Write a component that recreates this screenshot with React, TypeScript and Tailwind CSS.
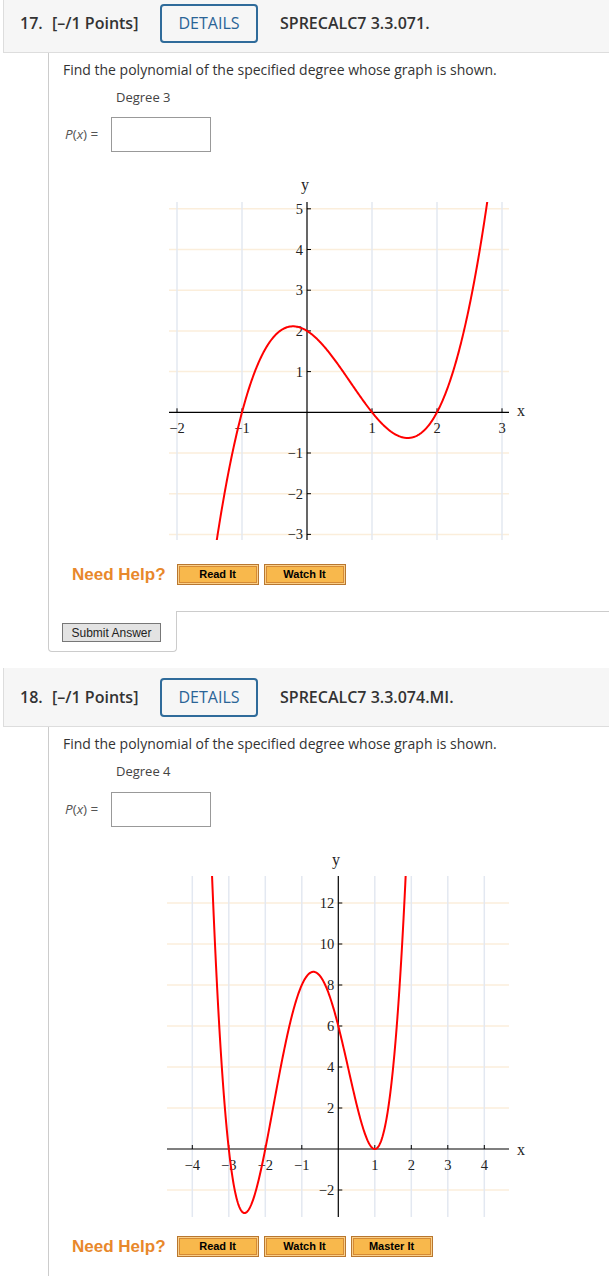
import React from 'react';

type GraphProps = {
  id: string;
  height: number;
  ox: number;
  oy: number;
  ux: number;
  uy: number;
  left: number;
  right: number;
  top: number;
  bottom: number;
  gridX: number[];
  gridY: number[];
  xLabels: number[];
  yLabels: number[];
  yPos: [number, number];
  xPos: [number, number];
  f: (x: number) => number;
};

const fmt = (n: number) => (n < 0 ? `\u2212${Math.abs(n)}` : `${n}`);

const Graph = (g: GraphProps) => {
  const px = (x: number) => g.ox + x * g.ux;
  const py = (y: number) => g.oy - y * g.uy;
  const x0 = (g.left - g.ox) / g.ux;
  const x1 = (g.right - g.ox) / g.ux;
  let d = '';
  const steps = 600;
  for (let i = 0; i <= steps; i++) {
    const x = x0 + ((x1 - x0) * i) / steps;
    let y = py(g.f(x));
    if (y < -200) y = -200;
    if (y > g.height + 200) y = g.height + 200;
    d += `${i === 0 ? 'M' : 'L'}${px(x).toFixed(2)},${y.toFixed(2)} `;
  }

  return (
    <svg width={375} height={g.height} className="block" style={{ fontFamily: '"Liberation Serif", "DejaVu Serif", serif' }}>
      <defs>
        <clipPath id={g.id}>
          <rect x={g.left} y={g.top} width={g.right - g.left} height={g.bottom - g.top} />
        </clipPath>
      </defs>
      {g.gridY.map((v) => (
        <line key={`gy${v}`} x1={g.left} x2={g.right} y1={py(v)} y2={py(v)} stroke="#fbeedb" strokeWidth={1.5} />
      ))}
      {g.gridX.map((v) => (
        <line key={`gx${v}`} x1={px(v)} x2={px(v)} y1={g.top} y2={g.bottom} stroke="#e3e8f1" strokeWidth={1.5} />
      ))}
      <line x1={g.left} x2={g.right} y1={g.oy} y2={g.oy} stroke="#000" strokeWidth={1.2} />
      <line x1={g.ox} x2={g.ox} y1={g.top} y2={g.bottom} stroke="#000" strokeWidth={1.2} />
      {g.xLabels.map((v) => (
        <g key={`xl${v}`}>
          <line x1={px(v)} x2={px(v)} y1={g.oy - 4} y2={g.oy} stroke="#000" strokeWidth={1} />
          <text x={px(v)} y={g.oy + 21} fontSize={14.5} textAnchor="middle" fill="#222">
            {fmt(v)}
          </text>
        </g>
      ))}
      {g.yLabels.map((v) => (
        <g key={`yl${v}`}>
          <line x1={g.ox} x2={g.ox + 4} y1={py(v)} y2={py(v)} stroke="#000" strokeWidth={1} />
          <text x={g.ox - 4} y={py(v) + 5} fontSize={14.5} textAnchor="end" fill="#222">
            {fmt(v)}
          </text>
        </g>
      ))}
      <text x={g.yPos[0]} y={g.yPos[1]} fontSize={16} textAnchor="middle" fill="#222">
        y
      </text>
      <text x={g.xPos[0]} y={g.xPos[1]} fontSize={16} textAnchor="middle" fill="#222">
        x
      </text>
      <path d={d} fill="none" stroke="#ff0000" strokeWidth={2} clipPath={`url(#${g.id})`} strokeLinejoin="round" />
    </svg>
  );
};

const Header = ({ num, code }: { num: string; code: string }) => (
  <div className="ml-[3px] h-[59px] border-l border-b border-[#dddddd] bg-[#f6f6f6] flex items-center pl-[16px] text-[16px] font-semibold text-[#333]">
    <span className="inline-block w-[32px]">{num}</span>
    <span className="inline-block w-[108px]">[–/1 Points]</span>
    <span className="w-[98px] h-[39px] border-2 border-[#2f6b9a] rounded-[4px] flex items-center justify-center font-normal text-[#2a6496]">
      DETAILS
    </span>
    <span className="ml-[22px]">{code}</span>
  </div>
);

const HelpBtn = ({ label }: { label: string }) => (
  <span
    className="w-[82px] h-[21px] border border-[#b9772f] bg-[#f8b84c] flex items-center justify-center text-[11px] font-bold text-black"
    style={{ fontFamily: '"Liberation Sans", Arial, sans-serif', boxShadow: 'inset 0 0 0 1px #f9d08a, inset 0 0 0 2px #d58a35' }}
  >
    {label}
  </span>
);

const NeedHelp = ({ labels, mt }: { labels: string[]; mt: string }) => (
  <div className={`flex items-center h-[21px] ml-[9px] ${mt}`}>
    <span className="text-[17px] leading-[21px] font-bold text-[#e8882b] mr-[11px]" style={{ fontFamily: '"Liberation Sans", Arial, sans-serif' }}>
      Need Help?
    </span>
    <div className="flex gap-[5px]">
      {labels.map((l) => (
        <HelpBtn key={l} label={l} />
      ))}
    </div>
  </div>
);

const Prompt = ({ degree, gap }: { degree: number; gap: string }) => (
  <>
    <div className="text-[14px] leading-[18px] text-[#333]">Find the polynomial of the specified degree whose graph is shown.</div>
    <div className="mt-[9px] ml-[53px] text-[13px] leading-[18px] text-[#444]">Degree {degree}</div>
    <div className={`flex items-center ${gap}`}>
      <span className="ml-[2px] w-[46px] text-[13.5px] text-[#555]">
        <i>P</i>(<i>x</i>) =
      </span>
      <span className="w-[100px] h-[35px] border border-[#999] bg-white" />
    </div>
  </>
);

export default function App() {
  return (
    <div className="w-full min-h-[1276px] bg-white overflow-hidden" style={{ fontFamily: '"Open Sans", "Noto Sans", sans-serif' }}>
      <div className="-mt-[6px]">
        <Header num="17." code="SPRECALC7 3.3.071." />
      </div>
      <div className="ml-[48px] border-l border-[#cccccc] pl-[14px] pt-[8px] pb-[26px]">
        <Prompt degree={3} gap="mt-[11px]" />
        <div className="mt-[23px] ml-[92px]">
          <Graph
            id="g1"
            height={370}
            ox={152}
            oy={237.3}
            ux={65}
            uy={40.7}
            left={14}
            right={354}
            top={27}
            bottom={365}
            gridX={[-2, -1, 1, 2, 3]}
            gridY={[-3, -2, -1, 1, 2, 3, 4, 5]}
            xLabels={[-2, -1, 1, 2, 3]}
            yLabels={[-3, -2, -1, 1, 2, 3, 4, 5]}
            yPos={[150, 15]}
            xPos={[366, 241]}
            f={(x) => (x + 1) * (x - 1) * (x - 2)}
          />
        </div>
        <NeedHelp labels={['Read It', 'Watch It']} mt="mt-[19px]" />
      </div>
      <div className="ml-[48px] flex items-start">
        <div className="w-[129px] border-l border-r border-b border-[#cccccc] rounded-b-[4px] pl-[13px] pt-[12px] pb-[9px]">
          <span
            className="w-[99px] h-[19px] border border-[#777] bg-[#e3e3e3] flex items-center justify-center text-[12px] text-[#222]"
            style={{ fontFamily: '"Liberation Sans", Arial, sans-serif' }}
          >
            Submit Answer
          </span>
        </div>
        <div className="flex-1 border-t border-[#cccccc]" />
      </div>
      <div className="mt-[16px]">
        <Header num="18." code="SPRECALC7 3.3.074.MI." />
      </div>
      <div className="ml-[48px] border-l border-[#cccccc] pl-[14px] pt-[8px] pb-[40px]">
        <Prompt degree={4} gap="mt-[12px]" />
        <div className="mt-[23px] ml-[92px]">
          <Graph
            id="g2"
            height={372}
            ox={183.3}
            oy={299}
            ux={36.5}
            uy={20.5}
            left={12}
            right={354}
            top={26}
            bottom={367}
            gridX={[-4, -3, -2, -1, 1, 2, 3, 4]}
            gridY={[-2, 2, 4, 6, 8, 10, 12]}
            xLabels={[-4, -3, -2, -1, 1, 2, 3, 4]}
            yLabels={[-2, 2, 4, 6, 8, 10, 12]}
            yPos={[181, 15]}
            xPos={[366, 305]}
            f={(x) => (x + 3) * (x + 2) * (x - 1) * (x - 1)}
          />
        </div>
        <NeedHelp labels={['Read It', 'Watch It', 'Master It']} mt="mt-[14px]" />
      </div>
    </div>
  );
}
